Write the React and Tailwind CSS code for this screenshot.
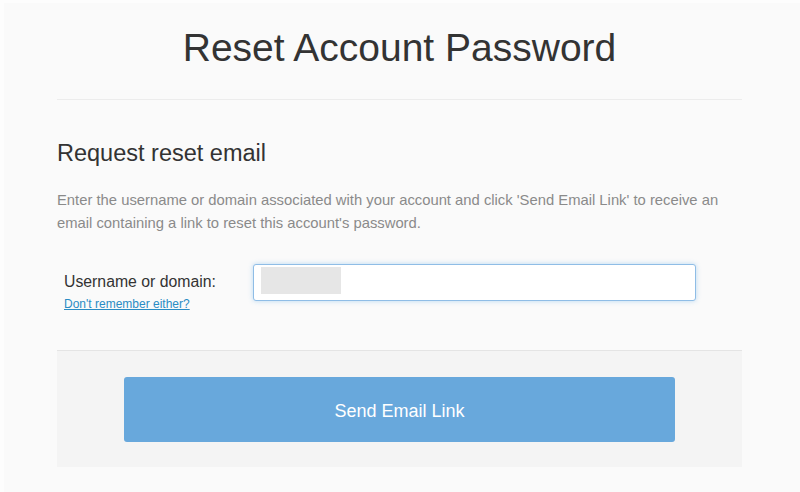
import React, { useState } from 'react';

const App = () => {
  const [username, setUsername] = useState('');

  return (
    <div
      className="min-h-[492px] bg-[#fafafa] border-l-[4px] border-t-[3px] border-[#fdfdfd]"
      style={{ fontFamily: '"Liberation Sans", Arial, sans-serif' }}
    >
      <div className="w-[685px] ml-[53px]">
        {/* Page title */}
        <div className="border-b border-[#ececec] pt-[22px] pb-[29px]">
          <h1 className="text-center text-[39px] leading-[45px] text-[#333333]">
            Reset Account Password
          </h1>
        </div>

        {/* Request section */}
        <div className="pt-[39px]">
          <h2 className="text-[23.5px] leading-[28px] text-[#333333]">Request reset email</h2>
          <p className="mt-[22px] text-[14.8px] leading-[23px] text-[#8a8a8a]">
            Enter the username or domain associated with your account and click 'Send Email Link' to receive an
            email containing a link to reset this account's password.
          </p>

          <div className="flex items-start mt-[29px] pl-[7px] pb-[39px]">
            <div className="w-[189px] pt-[8px]">
              <label className="block text-[15.8px] leading-[20px] text-[#333333]">Username or domain:</label>
              <a href="#" className="block mt-[5px] text-[12px] leading-[14px] text-[#2a8cc4] underline">
                Don't remember either?
              </a>
            </div>
            <div className="relative w-[443px] h-[37px] rounded-[3px] border border-[#8fbde6] bg-white shadow-[0_0_5px_rgba(102,175,233,0.45)]">
              <div className="absolute left-[7px] top-[2px] w-[80px] h-[27px] bg-[#e6e6e6]" />
              <input
                type="text"
                value={username}
                onChange={(e) => setUsername(e.target.value)}
                className="w-full h-full bg-transparent px-2 outline-none"
              />
            </div>
          </div>
        </div>

        {/* Footer with button */}
        <div className="border-t border-[#e4e4e4] bg-[#f4f4f4] pt-[26px] pb-[25px] flex justify-center">
          <button className="w-[551px] h-[65px] pt-[3px] rounded-[3px] bg-[#68a8dc] text-white text-[18px]">
            Send Email Link
          </button>
        </div>
      </div>
    </div>
  );
};

export default App;
